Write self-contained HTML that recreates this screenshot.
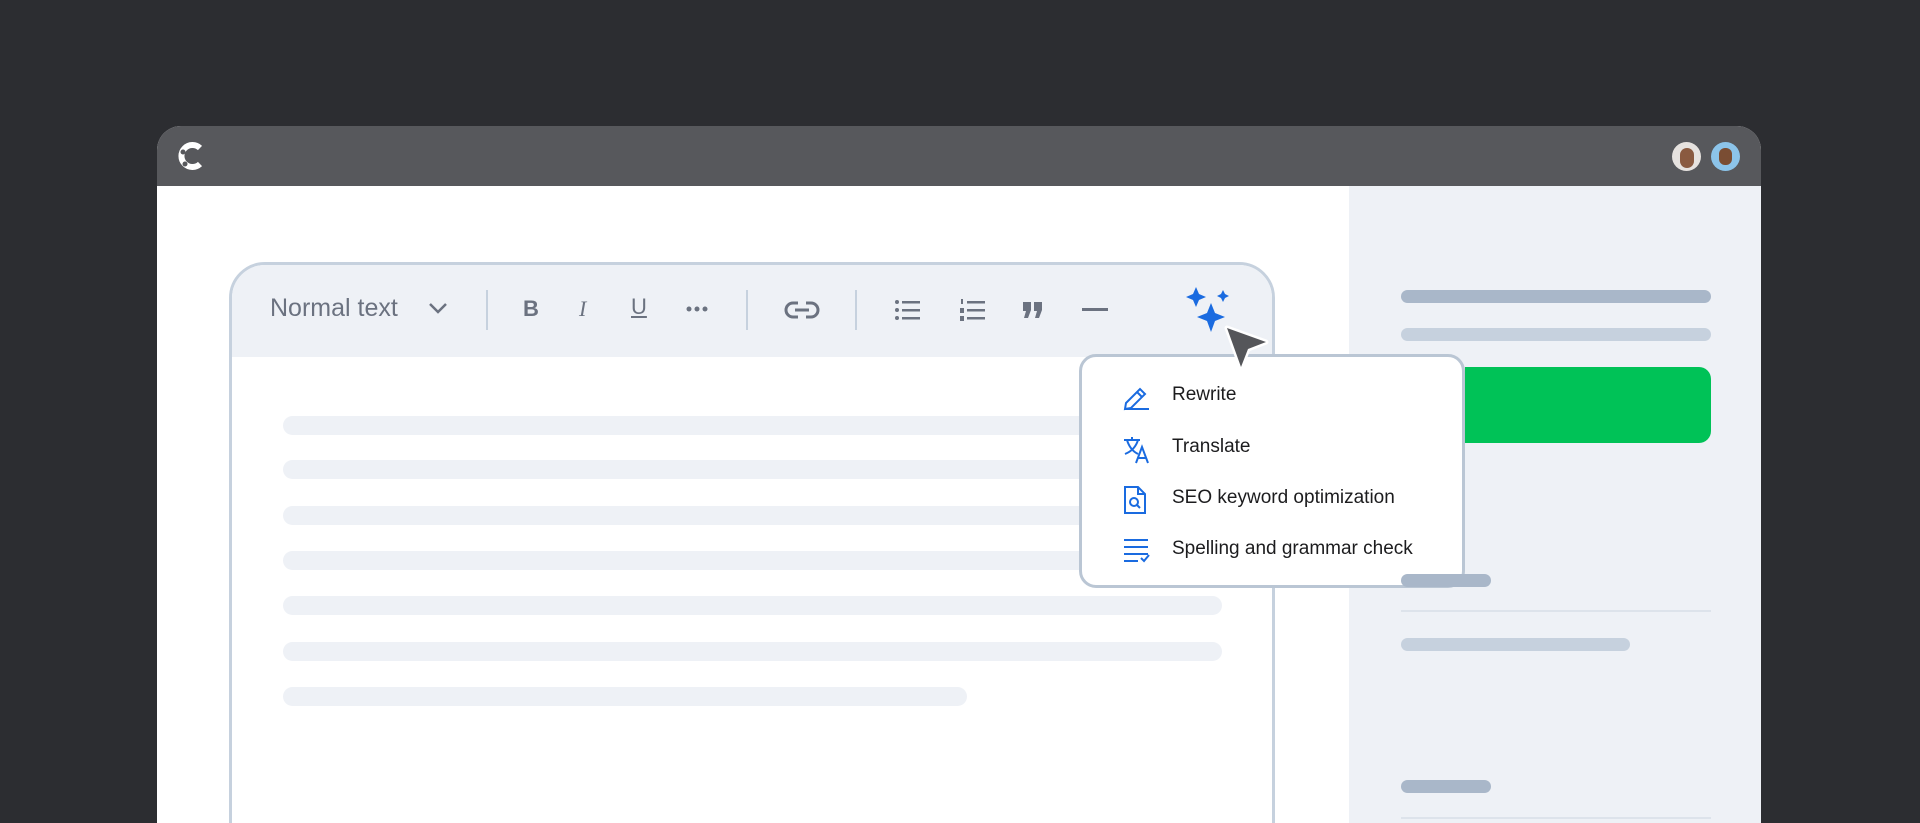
<!DOCTYPE html>
<html><head><meta charset="utf-8"><style>
*{margin:0;padding:0;box-sizing:border-box}
html,body{width:1920px;height:823px;overflow:hidden}
body{background:#2c2d31;font-family:"Liberation Sans",sans-serif}
#c{position:absolute;left:0;top:0;width:1920px;height:823px;overflow:hidden}
.win{position:absolute;left:157px;top:126px;width:1604px;height:720px;border-radius:24px 24px 0 0;background:#fff;overflow:hidden}
.tb{position:absolute;left:0;top:0;width:100%;height:60px;background:#57585c}
.side{position:absolute;left:1192px;top:60px;right:0;bottom:0;background:#eef1f6}
.ed{position:absolute;left:229px;top:262px;width:1046px;height:600px;border:3px solid #c6d1de;border-radius:36px;background:#fff;overflow:hidden}
.tool{position:absolute;left:0;top:0;width:100%;height:92px;background:#eef1f6}
.line{position:absolute;height:19px;border-radius:10px;background:#eef1f6}
.bar{position:absolute;border-radius:7px}
.pop{position:absolute;left:1079px;top:354px;width:386px;height:234px;background:#fff;border:3px solid #bac6d4;border-radius:17px}
.it{position:absolute;left:90px;font-size:19px;color:#1c1c1e;font-weight:500}
.ic{position:absolute;left:40px}
.t{position:absolute;color:#6b7280}
.sep{position:absolute;top:290px;width:2px;height:40px;background:#c6d1de}
</style></head><body><div id="c">
<div class="win">
<div class="tb"></div>
<div class="side"></div>
</div>
<svg style="position:absolute;left:178px;top:142px" width="28" height="28" viewBox="0 0 28 28"><path d="M22 6A11 11 0 1 0 22 22" fill="none" stroke="#fff" stroke-width="6"/><circle cx="5" cy="10" r="2.5" fill="#57585c"/><circle cx="7" cy="22" r="2.5" fill="#57585c"/></svg>
<div style="position:absolute;left:1672px;top:142px;width:29px;height:29px;border-radius:50%;background:#e6e2df;overflow:hidden"><div style="margin:6px auto;width:14px;height:20px;border-radius:7px;background:#8a5a40"></div></div>
<div style="position:absolute;left:1711px;top:142px;width:29px;height:29px;border-radius:50%;background:#8cc4ea;overflow:hidden"><div style="margin:6px auto;width:13px;height:17px;border-radius:6px;background:#7a4d33"></div></div>

<div class="ed"><div class="tool"></div>
<div class="line" style="left:51px;top:151px;width:888px"></div>
<div class="line" style="left:51px;top:195px;width:888px"></div>
<div class="line" style="left:51px;top:241px;width:888px"></div>
<div class="line" style="left:51px;top:286px;width:888px"></div>
<div class="line" style="left:51px;top:331px;width:939px"></div>
<div class="line" style="left:51px;top:377px;width:939px"></div>
<div class="line" style="left:51px;top:422px;width:684px"></div>
</div>
<div class="t" style="left:270px;top:294px;font-size:25px">Normal text</div>
<svg style="position:absolute;left:428px;top:301px" width="20" height="14"><path d="M2 3l8 8 8-8" fill="none" stroke="#6b7280" stroke-width="2.5"/></svg>
<div class="sep" style="left:486px"></div><div class="sep" style="left:746px"></div><div class="sep" style="left:855px"></div>
<div class="t" style="left:523px;top:296px;font-size:22px;font-weight:bold">B</div>
<div class="t" style="left:579px;top:296px;font-size:22px;font-style:italic;font-family:'Liberation Serif',serif">I</div>
<div class="t" style="left:631px;top:294px;font-size:22px;text-decoration:underline">U</div>
<svg style="position:absolute;left:686px;top:306px" width="22" height="6" fill="#6b7280"><circle cx="3" cy="3" r="2.5"/><circle cx="11" cy="3" r="2.5"/><circle cx="19" cy="3" r="2.5"/></svg>
<svg style="position:absolute;left:784px;top:298px" width="36" height="24"><path d="M14 5H9a7 7 0 0 0 0 14h5M22 5h5a7 7 0 0 1 0 14h-5M11 12h14" fill="none" stroke="#6b7280" stroke-width="3"/></svg>
<svg style="position:absolute;left:894px;top:298px" width="28" height="24" fill="#6b7280"><circle cx="3" cy="4" r="2"/><circle cx="3" cy="12" r="2"/><circle cx="3" cy="20" r="2"/><rect x="8" y="3" width="18" height="2.5"/><rect x="8" y="11" width="18" height="2.5"/><rect x="8" y="19" width="18" height="2.5"/></svg>
<svg style="position:absolute;left:959px;top:298px" width="28" height="24" fill="#6b7280"><rect x="8" y="3" width="18" height="2.5"/><rect x="8" y="11" width="18" height="2.5"/><rect x="8" y="19" width="18" height="2.5"/><rect x="2" y="1" width="2" height="5"/><rect x="1" y="10" width="4" height="5"/><rect x="1" y="18" width="4" height="5"/></svg>
<svg style="position:absolute;left:1022px;top:300px" width="22" height="20" fill="#6b7280"><path d="M1 2h8v8l-3 8H2l2-7H1zM12 2h8v8l-3 8h-4l2-7h-3z"/></svg>
<div style="position:absolute;left:1082px;top:308px;width:26px;height:3px;background:#6b7280"></div>
<svg style="position:absolute;left:1183px;top:285px" width="50" height="52" fill="#1a6be0"><path d="M13 2l3 7 7 3-7 3-3 7-3-7-7-3 7-3z"/><path d="M40 5l2 4 4 2-4 2-2 4-2-4-4-2 4-2z"/><path d="M28 18l4 10 10 4-10 4-4 11-4-11-10-4 10-4z"/></svg>

<div class="pop">
<svg class="ic" style="top:27px" width="28" height="28" fill="none" stroke="#1a6be0" stroke-width="2"><path d="M3 25l1-6L18 5l5 5L9 24zM15 8l5 5M3 25h24"/></svg>
<div class="it" style="top:27px">Rewrite</div>
<svg class="ic" style="top:78px" width="30" height="30" fill="none" stroke="#1a6be0" stroke-width="2"><path d="M2 5h16M10 2v3M5 5q3 10 11 14M16 5q-3 10-13 14M14 28l6-16 6 16M16 23h8"/></svg>
<div class="it" style="top:79px">Translate</div>
<svg class="ic" style="top:128px" width="26" height="30" fill="none" stroke="#1a6be0" stroke-width="2"><path d="M3 2h13l7 7v19H3zM16 2v7h7"/><circle cx="12" cy="17" r="4"/><path d="M15 20l3 3"/></svg>
<div class="it" style="top:130px">SEO keyword optimization</div>
<svg class="ic" style="top:180px" width="28" height="26" fill="none" stroke="#1a6be0" stroke-width="2"><path d="M2 3h24M2 10h24M2 17h24M2 24h14M19 21l3 3 5-6"/></svg>
<div class="it" style="top:181px">Spelling and grammar check</div>
</div>
<svg style="position:absolute;left:1218px;top:322px" width="56" height="52"><path d="M9 6L48 20 30 27 23 45z" fill="#55565a" stroke="#fff" stroke-width="5" stroke-linejoin="round" paint-order="stroke"/></svg>

<div class="bar" style="left:1401px;top:290px;width:310px;height:13px;background:#a9b7c9"></div>
<div class="bar" style="left:1401px;top:328px;width:310px;height:13px;background:#c6d1de"></div>
<div class="bar" style="left:1465px;top:367px;width:246px;height:76px;background:#00c257;border-radius:0 12px 12px 0"></div>
<div class="bar" style="left:1401px;top:574px;width:90px;height:13px;background:#a9b7c9"></div>
<div style="position:absolute;left:1401px;top:610px;width:310px;height:2px;background:#dde3eb"></div>
<div class="bar" style="left:1401px;top:638px;width:229px;height:13px;background:#c6d1de"></div>
<div class="bar" style="left:1401px;top:780px;width:90px;height:13px;background:#a9b7c9"></div>
<div style="position:absolute;left:1401px;top:817px;width:310px;height:2px;background:#dde3eb"></div>
</div></body></html>
